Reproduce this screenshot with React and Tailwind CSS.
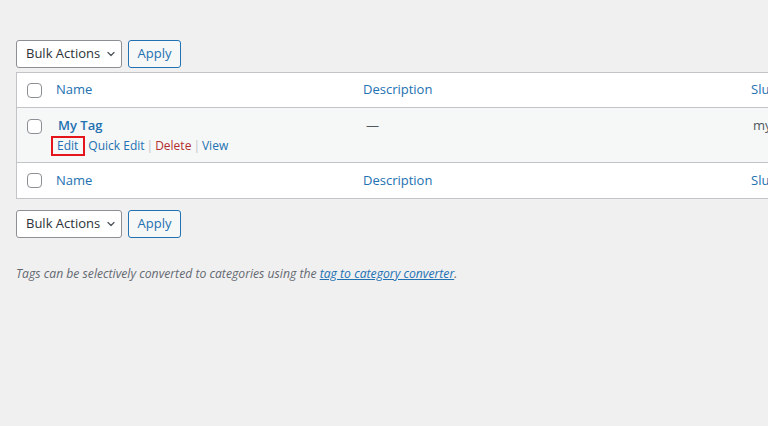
import React from "react";

const font = { fontFamily: '"Open Sans", "Noto Sans", Arial, sans-serif' };

function Checkbox() {
  return <span className="block w-[15px] h-[15px] rounded-[4px] border border-[#8c8f94] bg-white" />;
}

function Chevron() {
  return (
    <svg width="10" height="10" viewBox="0 0 20 20" className="ml-[6px]">
      <path d="M4 7 L10 13 L16 7" fill="none" stroke="#50575e" strokeWidth="2.6" strokeLinecap="round" strokeLinejoin="round" />
    </svg>
  );
}

function Actions() {
  return (
    <div className="flex items-center gap-[6px] h-[28px]">
      <div className="flex items-center w-[106px] h-[28px] rounded-[3px] border border-[#8c8f94] bg-white pl-[9px] text-[13px] text-[#2c3338]">
        <span>Bulk Actions</span>
        <Chevron />
      </div>
      <div className="flex items-center justify-center w-[53px] h-[28px] rounded-[3px] border border-[#2271b1] bg-[#f6f7f7] text-[13px] text-[#2271b1]">
        Apply
      </div>
    </div>
  );
}

function HeadRow({ border }) {
  return (
    <div className={`flex items-center h-[35px] bg-white ${border}`}>
      <div className="w-[31px] pl-[10px] flex items-center"><Checkbox /></div>
      <div className="w-[307px] pl-[8px] text-[13px] text-[#2271b1]">Name</div>
      <div className="w-[388px] pl-[8px] text-[13px] text-[#2271b1]">Description</div>
      <div className="flex-1 pl-[8px] text-[13px] text-[#2271b1]">Slug</div>
    </div>
  );
}

export default function App() {
  return (
    <div className="w-[768px] h-[426px] overflow-hidden bg-[#f0f0f1]" style={font}>
      <div className="pl-[16px] pt-[40px]">
        <Actions />
        <div className="mt-[4px] w-[900px] border border-[#c3c4c7] bg-white">
          <HeadRow border="border-b border-[#c3c4c7]" />
          <div className="flex h-[55px] bg-[#f6f7f7] border-b border-[#c3c4c7]">
            <div className="w-[31px] pl-[10px] pt-[11px]"><Checkbox /></div>
            <div className="w-[307px] pl-[10px] pt-[8px]">
              <div className="text-[13px] font-semibold text-[#2271b1] leading-[18px]">My Tag</div>
              <div className="flex items-center text-[12px] leading-[18px] mt-[3px]">
                <span className="relative text-[#2271b1] -ml-[1px]">
                  Edit
                  <span className="absolute -left-[6px] -right-[7px] -top-[1px] -bottom-[1px] border-2 border-[#e5161b]" />
                </span>
                <span className="w-[10px]" />
                <span className="text-[#2271b1]">Quick Edit</span>
                <span className="text-[#c3c4c7] mx-[2px]">|</span>
                <span className="text-[#b32d2e]">Delete</span>
                <span className="text-[#c3c4c7] mx-[2px]">|</span>
                <span className="text-[#2271b1]">View</span>
              </div>
            </div>
            <div className="w-[388px] pl-[11px] pt-[8px] text-[13px] text-[#50575e] leading-[18px]">—</div>
            <div className="flex-1 pl-[10px] pt-[8px] text-[13px] text-[#50575e] leading-[18px]">my-tag</div>
          </div>
          <HeadRow border="" />
        </div>
        <div className="mt-[11px]"><Actions /></div>
        <p className="mt-[27px] text-[12.2px] italic text-[#646970]">
          Tags can be selectively converted to categories using the{" "}
          <span className="text-[#2271b1] underline">tag to category converter</span>.
        </p>
      </div>
    </div>
  );
}
